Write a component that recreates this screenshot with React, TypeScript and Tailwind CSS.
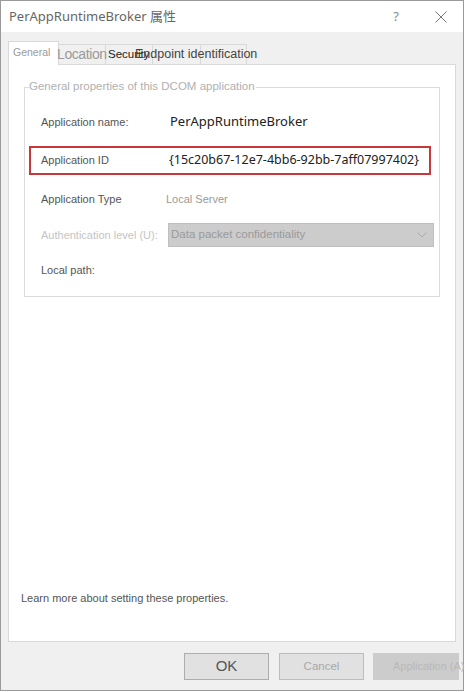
const sans = { fontFamily: '"Liberation Sans", Arial, sans-serif' };
const ui = { fontFamily: '"Noto Sans", "Noto Sans CJK SC", sans-serif' };

const tabs = [
  { w: 'w-[47px]', label: 'Location', cls: 'ml-[-2px] text-[14px] text-[#9a9a9a] tracking-[-0.4px]' },
  { w: 'w-[47px]', label: 'Security', cls: 'ml-[2px] text-[11.5px] text-[#222] font-medium' },
  { w: 'w-[48px]', label: 'Endpoint identification', cls: 'ml-[-18px] text-[12.5px] text-[#444]' },
  { w: 'w-[46px]', label: '', cls: '' },
];

const Row = ({ label, children, labelCls = 'text-[#555]' }: { label: string; children: React.ReactNode; labelCls?: string }) => (
  <div className="flex items-center h-[24px] pl-[16px]">
    <div className={`w-[128px] text-[11px] ${labelCls}`} style={sans}>{label}</div>
    {children}
  </div>
);

export default function App() {
  return (
    <div className="w-[465px] h-[692px] bg-white">
      <div className="w-[464px] h-[691px] border border-[#9a9a9a] flex flex-col">
        {/* title bar */}
        <div className="h-[31px] bg-white flex items-center pl-[8px] pr-[16px]">
          <span className="text-[13px] text-[#666]" style={ui}>PerAppRuntimeBroker 属性</span>
          <span className="ml-auto text-[13px] text-[#8a8a8a]" style={ui}>?</span>
          <svg className="ml-[36px]" width="12" height="12" viewBox="0 0 12 12">
            <path d="M0.5 0.5 L11.5 11.5 M11.5 0.5 L0.5 11.5" stroke="#777" strokeWidth="1" fill="none" />
          </svg>
        </div>

        {/* body */}
        <div className="flex-1 bg-[#f0f0f0] pt-[9px] pl-[7px] pr-[6px] flex flex-col">
          <div className="flex items-end h-[24px] -mb-[1px] relative z-10">
            <div className="w-[51px] h-[24px] bg-white border-t border-l border-r border-[#d9d9d9] pl-[4px] pt-[4px] flex items-start leading-none">
              <span className="text-[10.5px] text-[#9a9a9a] leading-[12px]" style={sans}>General</span>
            </div>
            {tabs.map((t, i) => (
              <div key={i} className={`${t.w} h-[21px] border border-l-0 border-[#d9d9d9] bg-[#f0f0f0] flex items-center overflow-visible`}>
                <span className={`relative z-10 whitespace-nowrap ${t.cls}`} style={sans}>{t.label}</span>
              </div>
            ))}
          </div>

          <div className="w-[448px] h-[578px] bg-white border border-[#d9d9d9] flex flex-col px-[15px] pt-[22px] pb-[35px]">
            <div className="relative w-[416px] border border-[#dcdcdc] pt-[22px] pb-[14px] flex flex-col">
              <span className="absolute -top-[9px] left-[4px] bg-white text-[11.5px] text-[#b0b0b0] leading-[14px] pr-[1px]" style={sans}>
                General properties of this DCOM application
              </span>

              <Row label="Application name:">
                <span className="ml-[1px] text-[13px] text-[#222]" style={ui}>PerAppRuntimeBroker</span>
              </Row>

              <div className="mt-[12px] ml-[4px] w-[402px] h-[29px] border-2 border-[#c8373a] flex items-center pl-[10px]">
                <div className="w-[128px] text-[11px] text-[#555]" style={sans}>Application ID</div>
                <span className="text-[12.5px] text-[#222]" style={ui}>{'{15c20b67-12e7-4bb6-92bb-7aff07997402}'}</span>
              </div>

              <div className="mt-[12px]">
                <Row label="Application Type">
                  <span className="-ml-[3px] text-[11px] text-[#9a9a9a]" style={sans}>Local Server</span>
                </Row>
              </div>

              <div className="mt-[12px]">
                <Row label="Authentication level (U):" labelCls="text-[#c4c4c4]">
                  <div className="-ml-[1px] w-[266px] h-[24px] bg-[#cccccc] border border-[#bfbfbf] flex items-center pl-[2px] pr-[6px]">
                    <span className="text-[11.5px] text-[#9a9a9a]" style={sans}>Data packet confidentiality</span>
                    <svg className="ml-auto" width="10" height="6" viewBox="0 0 10 6">
                      <path d="M0.5 0.5 L5 5 L9.5 0.5" stroke="#ababab" strokeWidth="1" fill="none" />
                    </svg>
                  </div>
                </Row>
              </div>

              <div className="mt-[11px]">
                <Row label="Local path:">
                  <span />
                </Row>
              </div>
            </div>

            <div className="mt-auto h-[16px] flex items-center -ml-[3px] text-[11px] text-[#555]" style={sans}>
              Learn more about setting these properties.
            </div>
          </div>

          <div className="mt-[11px] flex justify-end gap-[10px]">
            <div className="w-[85px] h-[27px] bg-[#e1e1e1] border border-[#adadad] flex items-center justify-center text-[15px] text-[#555]" style={sans}>
              OK
            </div>
            <div className="w-[85px] h-[27px] bg-[#e1e1e1] border border-[#bdbdbd] flex items-center justify-center text-[11.5px] text-[#a8a8a8]" style={sans}>
              Cancel
            </div>
            <div className="w-[86px] h-[27px] -ml-[1px] -mr-[2px] bg-[#cccccc] flex items-center pl-[20px] text-[11px] text-[#b8b8b8] whitespace-nowrap overflow-visible" style={sans}>
              Application (A)
            </div>
          </div>
        </div>
      </div>
    </div>
  );
}
